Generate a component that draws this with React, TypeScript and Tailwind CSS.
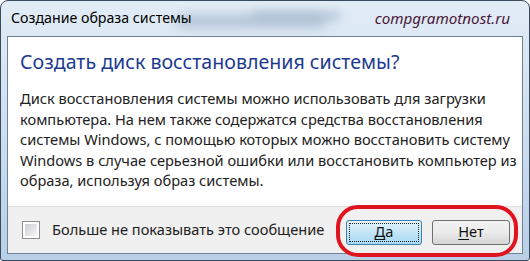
import React from "react";

const font = { fontFamily: '"Noto Sans", "Open Sans", sans-serif' };

const App = () => {
  return (
    <div className="relative w-[530px] h-[261px] overflow-hidden bg-white" style={font}>
      {/*// - Window frame */}
      <div className="flex flex-col w-[530px] h-[261px] rounded-t-[8px] rounded-b-[3px] border border-[#3b4b5e] bg-gradient-to-b from-[#e2ecf6] via-[#cddeef] to-[#b8cfe6]">
        {/*// - Title bar */}
        <div className="relative flex items-center justify-between h-[35px] pl-[10px] pr-[19px]">
          <div className="absolute left-[175px] top-[14px] w-[150px] h-[12px] rounded-full bg-[#8fa5bd] opacity-60 blur-[6px]" />
          <div className="absolute left-[250px] top-[10px] w-[90px] h-[10px] rounded-full bg-[#a9bccf] opacity-70 blur-[5px]" />
          <div className="relative text-[14.2px] text-black leading-none">Создание образа системы</div>
          <div className="relative text-[15.2px] italic text-[#4a1838] leading-none">compgramotnost.ru</div>
        </div>

        {/*// - Client area */}
        <div className="flex flex-col flex-1 mx-[6px] border border-[#6d8299] bg-white">
          <div className="flex flex-col flex-1 pl-[12px] pr-[8px]">
            <div className="pt-[11px] text-[19.6px] leading-[28px] text-[#1d3a8f]">Создать диск восстановления системы?</div>
            <div className="pt-[12px] text-[14.6px] leading-[20.6px] text-[#222] whitespace-nowrap">
              <div>Диск восстановления системы можно использовать для загрузки</div>
              <div>компьютера. На нем также содержатся средства восстановления</div>
              <div>системы Windows, с помощью которых можно восстановить систему</div>
              <div>Windows в случае серьезной ошибки или восстановить компьютер из</div>
              <div>образа, используя образ системы.</div>
            </div>
          </div>

          {/*// - Footer */}
          <div className="flex items-center justify-between h-[47px] border-t border-[#dfdfdf] bg-[#f0f0f0] pl-[14px] pr-[12px]">
            <div className="flex items-center gap-[12px]">
              <div className="w-[18px] h-[18px] border border-[#8e8f8f] bg-white p-[2px]">
                <div className="w-full h-full bg-gradient-to-br from-[#cbcfd5] to-[#f6f6f6]" />
              </div>
              <div className="text-[14.6px] text-[#222]">Больше не показывать это сообщение</div>
            </div>
            <div className="flex items-center gap-[10px] pt-[4px]">
              <button className="flex items-center justify-center w-[76px] h-[25px] rounded-[3px] border border-[#3c7fb1] bg-gradient-to-b from-[#e5f4fc] via-[#c4e5f6] to-[#a7d9f5] p-[2px]">
                <div className="flex items-center justify-center w-full h-full border border-dotted border-[#222] text-[14.6px] text-[#111]">
                  <span className="underline underline-offset-2">Д</span>а
                </div>
              </button>
              <button className="flex items-center justify-center w-[78px] h-[25px] rounded-[3px] border border-[#707070] bg-gradient-to-b from-[#f2f2f2] via-[#ebebeb] to-[#d5d5d5] text-[14.6px] text-[#111]">
                <span className="underline underline-offset-2">Н</span>ет
              </button>
            </div>
          </div>
        </div>
        <div className="h-[6px]" />
      </div>

      {/*// - Red highlight around buttons */}
      <div className="absolute left-[336px] top-[205px] w-[182px] h-[52px] rounded-[22px] border-[4px] border-[#e0141e]" />
    </div>
  );
};

export default App;
